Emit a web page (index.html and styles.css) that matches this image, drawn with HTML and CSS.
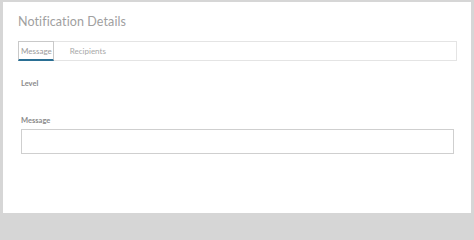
FILE: index.html
```html
<!DOCTYPE html>
<html>
<head>
<meta charset="utf-8">
<link rel="stylesheet" href="styles.css">
</head>
<body>
<div class="panel">
  <h1 class="title">Notification Details</h1>
  <div class="tabs">
    <div class="tab active">Message</div>
    <div class="tab">Recipients</div>
  </div>
  <div class="form">
    <div class="field">
      <label class="label">Level</label>
    </div>
    <div class="field field-message">
      <label class="label">Message</label>
      <div class="textarea"></div>
    </div>
  </div>
</div>
</body>
</html>
```
FILE: styles.css
```css
html, body {
  margin: 0;
  padding: 0;
}
body {
  background: #d6d6d6;
  width: 474px;
  height: 216px;
  overflow: hidden;
  font-family: Lato, "Open Sans", sans-serif;
}
.panel {
  margin: 2px 3px 0 3px;
  height: 211px;
  background: #ffffff;
  padding: 0 14px 0 15px;
  box-sizing: border-box;
}
.title {
  margin: 0;
  padding-top: 10px;
  font-size: 12.5px;
  line-height: 20px;
  font-weight: 400;
  color: #a0a0a0;
  letter-spacing: 0.1px;
}
.tabs {
  margin-top: 9px;
  height: 20px;
  box-sizing: border-box;
  border: 1px solid #e4e4e4;
  display: flex;
  align-items: stretch;
}
.tab {
  font-size: 8px;
  color: #a8a8a8;
  display: flex;
  align-items: center;
  padding: 0 1px 0 2px;
}
.tab.active {
  margin: -1px 0 -1px -1px;
  border: 1px solid #c9c9c9;
  border-bottom: 2px solid #2a6f94;
  color: #9a9a9a;
}
.tab + .tab {
  margin-left: 14px;
}
.form {
  padding: 0 3px;
}
.field {
  display: flex;
  flex-direction: column;
}
.label {
  font-size: 7.5px;
  font-weight: 700;
  color: #8a8a8a;
  line-height: 8px;
}
.field:first-child {
  margin-top: 19px;
}
.field-message {
  margin-top: 29px;
}
.textarea {
  margin-top: 4px;
  height: 25px;
  box-sizing: border-box;
  border: 1px solid #cfcfcf;
  background: #fff;
}
```
